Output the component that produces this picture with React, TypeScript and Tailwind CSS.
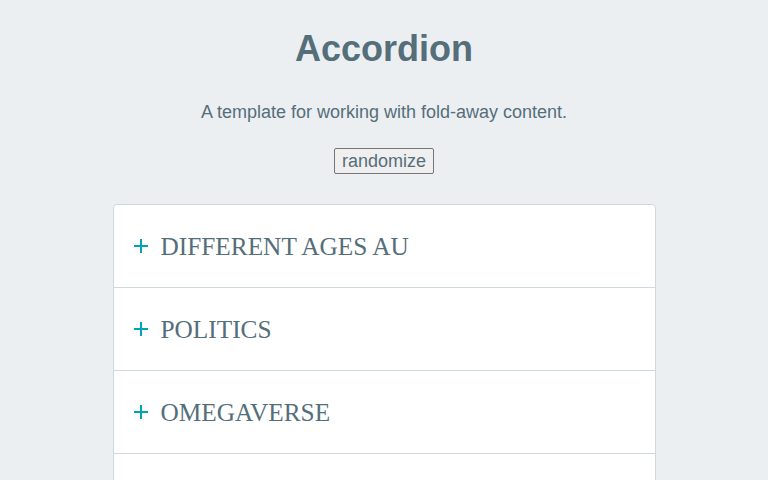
import React from "react";

const items = ["DIFFERENT AGES AU", "POLITICS", "OMEGAVERSE", "HURT/COMFORT"];

function Plus() {
  return (
    <svg width="16" height="16" viewBox="0 0 16 16" className="shrink-0">
      <path d="M8 1v14M1 8h14" stroke="#00a5b5" strokeWidth="2" fill="none" />
    </svg>
  );
}

export default function App() {
  return (
    <div className="min-h-screen bg-[#eceff1] text-[#546e7a] flex flex-col items-center" style={{ fontFamily: '"Liberation Sans", Arial, sans-serif' }}>
      <h1 className="text-[36px] font-bold leading-[42px] mt-[28px]">Accordion</h1>
      <p className="text-[18px] leading-[21px] mt-[32px]">A template for working with fold-away content.</p>
      <button className="mt-[25px] text-[18px] leading-[22px] px-[7px] h-[26px] border border-[#767676] rounded-[2px] bg-[#efefef] text-[#546e7a]">randomize</button>
      <div className="mt-[30px] w-[543px] bg-white border border-[#cfd8dc] rounded-t-[4px]">
        {items.map((t) => (
          <div key={t} className="h-[83px] border-b border-[#cfd8dc] flex items-center pl-[19px] gap-[12px]">
            <Plus />
            <span className="text-[25.3px] leading-[30px]" style={{ fontFamily: '"Liberation Serif", "Times New Roman", serif' }}>{t}</span>
          </div>
        ))}
      </div>
    </div>
  );
}
